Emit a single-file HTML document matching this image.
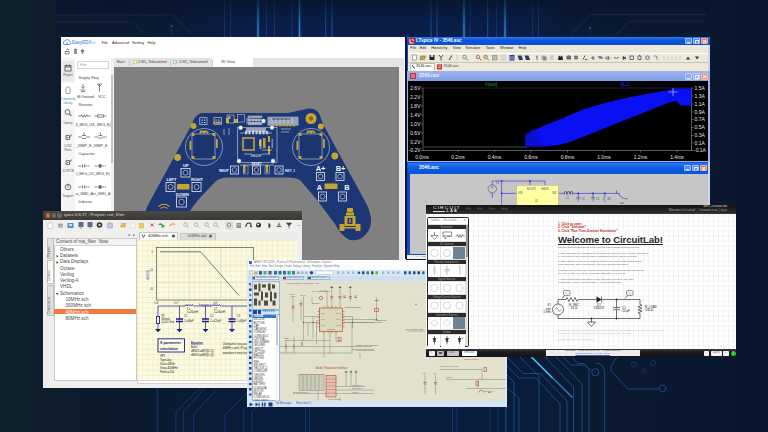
<!DOCTYPE html>
<html lang="en">
<head>
<meta charset="utf-8">
<title>Circuit design software</title>
<style>
*{box-sizing:border-box;margin:0;padding:0}
html,body{width:768px;height:432px;overflow:hidden;background:#0a1a38}
body{position:relative;font-family:"Liberation Sans",sans-serif;color:#222}
.abs{position:absolute}
#bg{position:absolute;left:0;top:0;width:768px;height:432px;
 background:linear-gradient(90deg,#10212e 0,#0f202d 24px,#0e1e2c 30px,#0e1d2c 54px,#0c1b2e 62px,#0b1b32 130px,#0a1c3e 200px,#0a1f4c 245px,#0a1f4e 500px,#0a1c3c 560px,#0a1a32 620px,#0a192f 708px,#0a1831 733px,#08162e 737px,#08162e 768px)}
#bg2{position:absolute;left:0;top:300px;width:768px;height:132px;
 background:linear-gradient(90deg,#10212e 0,#0f202d 24px,#0e1e2c 30px,#0e1d2c 54px,#0c1b2c 100px,#0b1b32 180px,#0a1c3b 260px,#0a1c3e 400px,#0a1c3b 520px,#0b1a30 600px,#0a1830 708px,#0a1830 733px,#08162e 737px,#08162e 768px)}
#bgsvg{position:absolute;left:0;top:0}
.win{position:absolute;overflow:hidden}
.t{position:absolute;white-space:nowrap;line-height:1}
/* ---------- EasyEDA ---------- */
#easy{left:61px;top:37px;width:345px;height:223px;background:#fff}
/* ---------- LTspice ---------- */
#lts{left:405px;top:37px;width:305.200px;height:222px;background:#ece9d8}
/* ---------- Qucs ---------- */
#qucs{left:43px;top:211px;width:259px;height:177px;background:#efefee}
/* ---------- Proteus ---------- */
#prot{left:247px;top:259.500px;width:260px;height:147.500px;background:#e6e6d6}
/* ---------- CircuitLab ---------- */
#clab{left:426px;top:205px;width:310px;height:152px;background:#fff}
.ez-m{font-size:4px;color:#333;letter-spacing:-.1px}
.ez-n{font-size:3px;color:#555;text-align:center;line-height:1.200;white-space:normal}
.ez-l{font-size:3.800px;color:#444}
.ez-t{font-size:3.800px;color:#444}
.xpb{width:7.200px;height:6.600px;border-radius:1.200px;border:.4px solid rgba(255,255,255,.45);overflow:hidden}
.xpb i{position:absolute;display:block;background:#fff;opacity:.85}
.lt-m{font-size:3.800px;color:#222;top:10.200px}
.q-i{font-size:4.600px;color:#4a4a4a}
.qv{font-size:3px;color:#555;transform:rotate(-90deg);transform-origin:0 0}
#qgrid{background-image:linear-gradient(90deg,rgba(200,195,140,.2) .5px,transparent .5px),linear-gradient(rgba(200,195,140,.2) .5px,transparent .5px);background-size:5.200px 5.200px}
.pr-t{font-size:2.500px;color:#456;top:17.600px}
.pr-l{font-size:2.700px;line-height:3.250px;color:#333;white-space:nowrap}
#cgrid{background-color:#fff;background-image:linear-gradient(90deg,#f3f3f3 .6px,transparent .6px),linear-gradient(#f3f3f3 .6px,transparent .6px);background-size:5px 5px;background-position:2px 1.500px}
.cb{top:145.500px;height:5px;border-radius:.8px}
.cp{left:132px;font-size:2.400px;line-height:3.300px;color:#606060}
.th{position:absolute;left:1.700px;width:38px;height:4.200px;background:#2b2b2b;color:#a5a5a5;font-size:2.600px;line-height:1;display:flex;align-items:center;justify-content:center;white-space:nowrap;padding-top:2.600px}
.tc{position:absolute;width:12px;height:12.300px;background:#fff}

</style>
</head>
<body>
<div id="bg"></div><div id="bg2"></div>
<svg id="bgsvg" width="768" height="432" viewBox="0 0 768 432">
<defs>
 <linearGradient id="vfade" x1="0" y1="0" x2="0" y2="1"><stop offset="0" stop-color="#08142c" stop-opacity=".8"/><stop offset=".55" stop-color="#08142c" stop-opacity=".25"/><stop offset="1" stop-color="#08142c" stop-opacity="0"/></linearGradient>
</defs>
<!-- top verticals -->
<g fill="none" stroke-linecap="round">
 <g stroke="#163f7c" stroke-width=".9">
  <path d="M224.500,0V37M230.700,0V37M266.500,0V37M274.500,0V37M292,0V37M470,0V37M496.500,0V37M532.700,0V37M538.500,0V37"/>
 </g>
 <g stroke="#1d5aa6" stroke-width="1">
  <path d="M325.700,0V37M332,0V37M431,0V37M437,0V37M487.700,0V37"/>
 </g>
 <g stroke="#2f8fdc" stroke-width="3.500" opacity=".18">
  <path d="M258,0V37M299.500,0V37M464,0V37M505,0V37"/>
 </g>
 <g stroke="#2f95e0" stroke-width="1.300">
  <path d="M258,0V37M299.500,0V37M464,0V37M505,0V37"/>
 </g>
 <rect x="56" y="0" width="655" height="37" fill="url(#vfade)" stroke="none"/>
 <g stroke="#182f56" stroke-width=".8">
  <path d="M57,15H173L192,34M57,22H132.500L145.500,35M171.500,25V37"/>
  <path d="M706,14.500H591L571,34M706,21H630L615,36M590,27V37"/>
  
 </g>
 <circle cx="171.500" cy="26" r="1.200" fill="#1f4a86"/><circle cx="590" cy="28" r="1.200" fill="#1f4a86"/>
 <!-- bottom traces -->
 <g stroke="#173a78" stroke-width=".9">
  <path d="M157.300,388V432"/>
  <path d="M199,389L176,412V432M204,389L183.300,412V432M216.700,390L193.700,414V432M247,393L225,415V432M243.700,409V432M262,400L252,411V432"/>
  <path d="M305.600,406V432M309.400,406V432M452.500,406V432M457,406V432M490,406V432M498,406V432M505.600,406V432"/>
 </g>
 <g stroke="#194a84" stroke-width="1">
  <path d="M507,357L523,373.500H541L567,401V432"/>
  <path d="M507,366L519,378H536L560,404V432"/>
  <path d="M507,375L514,382V432M507,388L519,398V432M507,397L506,398V432"/>
  <path d="M520,357L539,376V432"/>
  <path d="M545,357L573.500,387V432"/>
  <path d="M556,357L566,367L582,384V432"/>
  <path d="M563,357L571,365H585L589,369V432" stroke="#1a4c86"/>
  <path d="M591.500,371L584,363.500H578L572,357"/>
  <path d="M604.700,374V432M604.700,374Q604.700,363 596,363" stroke="#1a4c86"/>
  <path d="M617,357L611,366V371L628,389H659"/>
 </g>
 <g stroke="#153a68" stroke-width=".8"><circle cx="634" cy="364.500" r="2.500"/><circle cx="644" cy="371" r="2"/><circle cx="653" cy="363" r="2.500"/></g>
 <circle cx="595.300" cy="372.300" r="3.600" stroke="#194a84" stroke-width="1"/>
 <circle cx="662.500" cy="388.500" r="3.300" stroke="#194a84" stroke-width="1"/>
 <path d="M531,356.500L572,397" stroke="#2a86c8" stroke-width="1.300"/>
 <path d="M531,356.500L552,377.500" stroke="#46bdf0" stroke-width="1.500"/>
</g>

</svg>

<div class="win" id="easy">
<div class="abs" style="left:0;top:0;width:345px;height:21px;background:#fff"></div>
<!-- logo -->
<svg class="abs" style="left:2px;top:2px" width="8" height="7" viewBox="0 0 16 14"><path d="M4 11a3.5 3.5 0 0 1 0-7 5 5 0 0 1 9.500 1.500A3 3 0 0 1 13 11z" fill="none" stroke="#5b8fd8" stroke-width="2"/><circle cx="8" cy="8" r="1.600" fill="#5b8fd8"/></svg>
<div class="t" style="left:11px;top:2.500px;font-size:5.800px;font-weight:bold;color:#6a9be0;letter-spacing:-.2px;transform:scaleX(.8);transform-origin:0 0">EasyEDA<span style="font-size:3px;color:#9ab;font-weight:normal"> Std</span></div>
<div class="t ez-m" style="left:40.500px;top:3.500px">File</div>
<div class="t ez-m" style="left:51px;top:3.500px">Advanced</div>
<div class="t ez-m" style="left:71px;top:3.500px">Setting</div>
<div class="t ez-m" style="left:86.500px;top:3.500px">Help</div>
<!-- toolbar icons -->
<svg class="abs" style="left:3px;top:11px" width="26" height="7" viewBox="0 0 26 7"><path d="M1 3.500h4v2.500H1.500zM2 2l1.500-1 1.500 1" fill="none" stroke="#555" stroke-width=".7"/><rect x="10" y=".8" width="3" height="5" fill="#777"/><path d="M10 2.500h3M10 4h3" stroke="#ccc" stroke-width=".5"/><circle cx="18.500" cy="3" r="1.700" fill="#777"/><path d="M17.800 5.500h1.400" stroke="#555" stroke-width=".7"/></svg>
<!-- left nav -->
<div class="abs" style="left:0;top:21px;width:14px;height:202px;background:#f4f4f4"></div>
<div class="abs" style="left:0;top:46px;width:14px;height:26px;background:#fff"></div>
<div class="abs" style="left:1px;top:24px;width:12px;height:20px;background:#e9e9e9"></div>
<svg class="abs" style="left:0;top:21px" width="14" height="202" viewBox="0 0 14 202">
 <g fill="none" stroke="#555" stroke-width=".8">
  <rect x="4" y="7.500" width="6" height="5.500"/><path d="M4 9h6M5.500 6.500v2M8.500 6.500v2"/>
  <path d="M5 30.500q0-1.500 1-1.500h2q1 0 1 1.500v5H5z" stroke="#7a8aa0"/>
  <circle cx="6.500" cy="54" r="2.400"/><path d="M8.300 55.800l2 2" stroke-width="1.200"/>
  <path d="M5 77.500h3.500v4H5zM8.500 78.500q2 0 2-2" /><path d="M5.500 79.500h2" />
  <path d="M5 102.500h3.500v4H5zM8.500 103.500q2 0 2-2" /><path d="M5.500 104.500h2" />
  <circle cx="7" cy="129" r="2.800"/><path d="M6.300 128.300q.2-1.200 1.200-.8t-.5 1.700v.6" stroke-width=".6"/>
 </g>
</svg>
<div class="t ez-n" style="left:0;top:37px;width:14px">Project</div>
<div class="t ez-n" style="left:0;top:61px;width:14px;color:#3f7fd0">Commonly<br>Library</div>
<div class="t ez-n" style="left:0;top:85px;width:14px">Library</div>
<div class="t ez-n" style="left:0;top:108px;width:14px">LCSC<br>Parts</div>
<div class="t ez-n" style="left:0;top:133px;width:14px">JLCPCB</div>
<div class="t ez-n" style="left:0;top:158px;width:14px">Support</div>
<!-- library panel -->
<div class="abs" style="left:16px;top:24px;width:32px;height:7.500px;border:.5px solid #d4d4d4;background:#fff"></div>
<div class="t" style="left:19px;top:26.500px;font-size:3px;color:#999">Filter</div>
<div class="t ez-l" style="left:17.500px;top:40px">Supply Flag</div>
<div class="t ez-l" style="left:16px;top:59px;letter-spacing:-.05px">IB Ground&nbsp;&nbsp;&nbsp;&nbsp;VCC</div>
<div class="t ez-l" style="left:17.500px;top:67px">Resistor</div>
<div class="t ez-l" style="left:14.500px;top:86.500px;letter-spacing:-.1px">3_BKG_US._BKG_E(</div>
<div class="t ez-l" style="left:14.500px;top:107.500px;letter-spacing:-.1px">_33MP_E_33MP_E</div>
<div class="t ez-l" style="left:17.500px;top:115.500px">Capacitor</div>
<div class="t ez-l" style="left:14.500px;top:135.500px;letter-spacing:-.1px">J_BKG_UC_BKG_E(</div>
<div class="t ez-l" style="left:14.500px;top:156px;letter-spacing:-.1px">ai_SMD_Asr_SMD_A</div>
<div class="t ez-l" style="left:17.500px;top:164px">Inductor</div>
<svg class="abs" style="left:14px;top:41.500px" width="38" height="130" viewBox="0 0 38 130">
 <g fill="none" stroke="#555" stroke-width=".7">
  <path d="M8 5v4M6 7.500l2 2 2-2M5.500 11h5M6 12.500h4" />
  <path d="M24.500 13V7M22.500 5.500l2 2 2-2M24.500 5.500v2M22 5h5" />
  <path d="M3 37h3l.7-1.300 1.300 2.600 1.300-2.600 1.300 2.600 1.300-2.600.7 1.300h3"/>
  <path d="M19.500 37h3M22.500 35.800h6v2.400h-6zM28.500 37h3"/>
  <path d="M3 58h4M7 56.500h4M7 59.500h4M9 56.500v-3M11 58h4"/>
  <path d="M19.500 58h4M23.500 56.500h4M23.500 59.500q2-1.500 4 0M25.500 56.500v-3M27.500 58h4"/>
  <path d="M3 87h4.500M7.500 85.300v3.400M9.500 85.300v3.400M9.500 87h5" stroke-dasharray="3 .6"/>
  <path d="M19.500 87h4.500M24 85.300v3.400M26 85.300v3.400M26 87h5" stroke-dasharray="3 .6"/>
  <path d="M3 108h4.500M7.500 106.300v3.400M9.500 106.300v3.400M9.500 108h5" stroke-dasharray="3 .6"/>
  <path d="M19.500 108h4.500M24 106.300v3.400M26 106.300v3.400M26 108h5" stroke-dasharray="3 .6"/>
 </g>
 <rect x="24.300" y="85.300" width="1.700" height="3.400" fill="#555"/><rect x="24.300" y="106.300" width="1.700" height="3.400" fill="#555"/>
</svg>
<!-- library scrollbar -->
<div class="abs" style="left:49.500px;top:21px;width:3px;height:202px;background:#f1f1f1"></div>
<div class="abs" style="left:50px;top:38px;width:2px;height:88px;background:#c4c4c4"></div>
<!-- tab bar -->
<div class="abs" style="left:52.500px;top:21px;width:293px;height:8.500px;background:#e3e3e3"></div>
<div class="abs" style="left:151px;top:21px;width:40.500px;height:8.500px;background:#fff"></div>
<div class="t ez-t" style="left:55.500px;top:23.500px">Start</div>
<div class="t ez-t" style="left:77px;top:23.500px">2.H1_Telecontrol</div>
<div class="t ez-t" style="left:118px;top:23.500px">2.H1_Telecontrol</div>
<div class="t ez-t" style="left:160px;top:23.500px">3D View</div>
<div class="abs" style="left:71.500px;top:23.300px;width:4px;height:4px;border:.5px solid #d8cc8a;background:#f8f3cc"></div>
<div class="abs" style="left:112px;top:23.300px;width:4px;height:4px;border:.5px solid #a5d3a5;background:#dcf2dc"></div>
<div class="abs" style="left:67.500px;top:22.500px;width:.5px;height:6px;background:#c8c8c8"></div>
<div class="abs" style="left:108.500px;top:22.500px;width:.5px;height:6px;background:#c8c8c8"></div>
<div class="abs" style="left:150.500px;top:22.500px;width:.5px;height:6px;background:#c8c8c8"></div>
<!-- 3D canvas -->
<div class="abs" style="left:52.500px;top:29.500px;width:285px;height:194px;background:#808080"></div>
<div class="abs" style="left:337.500px;top:29.500px;width:5px;height:194px;background:#e9e9e9"></div>
<div class="abs" style="left:342.500px;top:0;width:3px;height:223px;background:#fff"></div>
<svg class="abs" style="left:0;top:0" width="345" height="223" viewBox="61 37 345 223">
<path d="M201,113 L288,113 L304,109.600 Q313,106.500 319,113 Q321,118 323,124 L367,205 Q374,220 369,230 Q362,242 350,240 Q341,236 335,224 L317,200 L300,180 Q296,177.500 288,177.500 L228,177.500 Q219,177.500 215,182 L198,200 L180,224 Q174,236 165,240 Q153,242 146,230 Q141,220 148,205 L192,124 Q194,116 201,113 Z" fill="#1d3774"/>
<g fill="none" stroke="#c8d2ea" stroke-width=".6">
 <circle cx="204" cy="147" r="18.500"/><circle cx="311" cy="147" r="18.500"/>
 <rect x="237.500" y="127.500" width="39.500" height="35"/>
</g>
<g fill="#1c356f" stroke="#c5cfea" stroke-width=".6">
 <rect x="192" y="134" width="23" height="25" rx="2"/><rect x="299" y="134" width="23" height="25" rx="2"/>
</g>
<g fill="#c6a434">
 <circle cx="311" cy="118.500" r="5.500"/><circle cx="320.800" cy="126.500" r="3"/><circle cx="334.800" cy="156" r="3.400"/>
 <circle cx="193.500" cy="126" r="3"/><circle cx="177.600" cy="157.500" r="3.400"/>
 <rect x="191.500" y="133" width="3" height="3"/><rect x="212.500" y="133" width="3" height="3"/><rect x="191.500" y="156" width="3" height="3"/><rect x="212.500" y="156" width="3" height="3"/>
 <rect x="298.500" y="133" width="3" height="3"/><rect x="319.500" y="133" width="3" height="3"/><rect x="298.500" y="156" width="3" height="3"/><rect x="319.500" y="156" width="3" height="3"/>
 <rect x="200" y="130.500" width="7" height="2"/><rect x="307" y="130.500" width="7" height="2"/>
 <rect x="189.500" y="141" width="1.800" height="9"/><rect x="216" y="139" width="1.800" height="9"/><rect x="296.500" y="141" width="1.800" height="9"/><rect x="323" y="139" width="1.800" height="9"/>
 <rect x="243" y="138" width="11" height="12" fill="none" stroke="#c6a434" stroke-width="1.600"/>
 <rect x="259" y="140" width="2" height="6"/><rect x="263" y="138" width="2.500" height="10"/><rect x="268" y="136" width="2" height="6"/><rect x="268" y="146" width="2" height="8"/>
 <rect x="226" y="118" width="3" height="5"/><rect x="234" y="119" width="4" height="4"/>
 <rect x="177" y="184" width="12.500" height="5.500" rx="1"/><rect x="324.500" y="183.500" width="13" height="5.500" rx="1"/>
 <rect x="243.500" y="165" width="2" height="8"/><rect x="266" y="165" width="2" height="8"/>
</g>
<circle cx="311" cy="118.500" r="2.200" fill="#7a6a2a"/>
<g fill="#9aa3b8">
 <rect x="247.700" y="115.600" width="14.500" height="9.500"/><rect x="267.500" y="116.700" width="31" height="9"/>
 <rect x="246" y="128" width="20" height="4"/>
</g>
<g fill="#22396f"><rect x="249" y="118" width="16" height="1"/><rect x="249" y="121" width="16" height="1"/><rect x="272" y="118.500" width="18" height="1"/></g>
<g fill="none" stroke="#dfe5f5" stroke-width=".6">
 <rect x="199.800" y="117.700" width="7.200" height="7"/><rect x="214" y="117.700" width="7.700" height="6.500"/>
 <path d="M240,133h10M258,133h14M240,165h34M262,150h10M262,154h8M244,154h8M281,129h10M281,132h8M224,129v6M229,128v7"/>
 <path d="M247,118v6M250,118v6M253,118v6M256,118v6M259,118v6M272,118.500v5M276,118.500v5M280,118.500v5M284,118.500v5M288,118.500v5M292,118.500v5"/>
</g>
<g fill="#dfe5f5"><rect x="201.500" y="119.500" width="1.200" height="1.200"/><rect x="204" y="119.500" width="1.200" height="1.200"/><rect x="201.500" y="122" width="1.200" height="1.200"/><rect x="204" y="122" width="1.200" height="1.200"/><rect x="215.500" y="119.500" width="1.200" height="1.200"/><rect x="218" y="119.500" width="1.200" height="1.200"/><rect x="215.500" y="122" width="1.200" height="1.200"/><rect x="218" y="122" width="1.200" height="1.200"/></g>
<g fill="#c6a434">
 <rect x="213.500" y="121.500" width="1.600" height="2.500"/><rect x="216.300" y="121.500" width="1.600" height="2.500"/><rect x="219.100" y="121.500" width="1.600" height="2.500"/>
 <rect x="275.500" y="123.800" width="2" height="2.600"/><rect x="279" y="123.800" width="2" height="2.600"/><rect x="282.500" y="123.800" width="2" height="2.600"/><rect x="286" y="123.800" width="2" height="2.600"/><rect x="289.500" y="123.800" width="2" height="2.600"/><rect x="293" y="123.800" width="2" height="2.600"/>
 <rect x="199.500" y="131.500" width="2" height="2"/><rect x="203" y="131.500" width="2" height="2"/><rect x="206.500" y="131.500" width="2" height="2"/>
 <rect x="306.500" y="131.500" width="2" height="2"/><rect x="310" y="131.500" width="2" height="2"/><rect x="313.500" y="131.500" width="2" height="2"/>
 <rect x="228" y="116" width="2.500" height="3"/>
</g>
<g fill="#dfe5f5" opacity=".85">
 <rect x="245" y="130.800" width="2.200" height="3.500"/><rect x="248.500" y="130.800" width="2.200" height="3.500"/><rect x="252" y="130.800" width="2.200" height="3.500"/><rect x="255.500" y="130.800" width="2.200" height="3.500"/><rect x="259" y="130.800" width="2.200" height="3.500"/><rect x="262.500" y="130.800" width="2.200" height="3.500"/><rect x="266" y="130.800" width="2.200" height="3.500"/>
 <rect x="259.500" y="139" width="2.200" height="10" opacity=".6"/><rect x="271.500" y="139" width="1.500" height="9" opacity=".6"/>
 <rect x="243.500" y="166" width="4.500" height="8" fill="none" stroke="#dfe5f5" stroke-width=".5"/><rect x="265" y="166" width="4.500" height="8" fill="none" stroke="#dfe5f5" stroke-width=".5"/>
</g>
<g fill="none" stroke="#dfe5f5" stroke-width=".5"><rect x="227" y="115" width="7" height="8"/><rect x="237.700" y="114.500" width="7" height="7.500"/></g>
<g fill="#f4f6fb" stroke="#5a6a8a" stroke-width=".5">
 <circle cx="240.600" cy="127.700" r="2.200"/><circle cx="272" cy="127.500" r="2.200"/><circle cx="263.500" cy="121" r="2.200"/><circle cx="239" cy="161" r="2.200"/><circle cx="273" cy="161" r="2.200"/>
</g>
<g fill="#1a3068" stroke="#e6ebf8" stroke-width=".8">
 <rect x="181" y="168.500" width="9" height="8.500"/><rect x="166" y="182.500" width="9" height="9"/><rect x="192" y="182.500" width="9" height="9"/><rect x="176.500" y="197" width="10" height="10"/>
 <rect x="230.500" y="166" width="8" height="8"/><rect x="252.500" y="166" width="8" height="8"/><rect x="275" y="166" width="8" height="8"/>
 <rect x="316.500" y="172.500" width="8" height="8"/><rect x="336" y="172.500" width="8" height="8"/><rect x="318.500" y="192" width="8" height="9"/><rect x="338.500" y="192" width="8" height="9"/>
</g>
<g fill="none" stroke="#e6ebf8" stroke-width=".6">
 <circle cx="185.500" cy="172.700" r="2.500"/><circle cx="170.500" cy="187" r="2.500"/><circle cx="196.500" cy="187" r="2.500"/><circle cx="181.500" cy="202" r="2.800"/>
 <circle cx="234.500" cy="170" r="2.300"/><circle cx="256.500" cy="170" r="2.300"/><circle cx="279" cy="170" r="2.300"/>
 <circle cx="320.500" cy="176.500" r="2.300"/><circle cx="340" cy="176.500" r="2.300"/><circle cx="322.500" cy="196.500" r="2.500"/><circle cx="342.500" cy="196.500" r="2.500"/>
</g>
<g fill="#f2f5fc" font-family="Liberation Sans, sans-serif" font-weight="bold">
 <text x="186" y="167" font-size="4.200" text-anchor="middle">UP</text>
 <text x="171.500" y="181" font-size="4" text-anchor="middle">LEFT</text>
 <text x="197" y="180.500" font-size="3.800" text-anchor="middle">RIGHT</text>
 <text x="182.400" y="195.500" font-size="4.200" text-anchor="middle">DOWN</text>
 <text x="219" y="171.500" font-size="3.200">WKUP</text>
 <text x="256.500" y="164.800" font-size="3" text-anchor="middle">RESET</text>
 <text x="285" y="171.500" font-size="3.200">KEY_1</text>
 <text x="256" y="157" font-size="2.600" text-anchor="middle" font-weight="normal">JHB103P</text>
 <text x="320.500" y="171" font-size="7.400" text-anchor="middle">A+</text>
 <text x="340.500" y="171" font-size="7.400" text-anchor="middle">B+</text>
 <text x="319.500" y="190" font-size="7.400" text-anchor="middle">A</text>
 <text x="347" y="190" font-size="7.400" text-anchor="middle">B</text>
</g>
<g fill="#c6a434">
 <rect x="347" y="208" width="6" height="4" rx="1"/><rect x="346" y="212.500" width="8" height="3"/><rect x="344.500" y="216" width="11" height="10"/><rect x="339.500" y="224" width="5" height="7"/><rect x="355.500" y="224" width="5" height="7"/><rect x="344" y="227" width="12" height="1.500"/>
</g>
<rect x="347.500" y="218" width="5" height="6" fill="#1d3774"/><rect x="349.300" y="219" width="1.400" height="4" fill="#c6a434"/>
<g fill="none" stroke="#c6a434" stroke-width="1.100"><path d="M160.500,208.500 q3.500,-3 7,0"/><path d="M158.500,206.500 q5.500,-4.600 11,0"/></g>

</svg>

</div>

<div class="win" id="lts">
<div class="abs" style="left:0;top:0;width:306px;height:222px;background:#0b4fd0"></div>
<div class="abs" style="left:0;top:0;width:2.300px;height:222px;background:#0c1230"></div>
<!-- title -->
<div class="abs" style="left:2px;top:0;width:304px;height:8px;background:linear-gradient(#2d7af0,#0a56dc 40%,#0a50d0)"></div>
<svg class="abs" style="left:3.500px;top:1px" width="6" height="6" viewBox="0 0 6 6"><rect width="6" height="6" fill="#c22"/><path d="M1 1v4h3.500M3 1.500l2 1" stroke="#fff" stroke-width=".9" fill="none"/></svg>
<div class="t" style="left:11px;top:1.500px;font-size:4.600px;font-weight:bold;color:#fff">LTspice IV - 3546.asc</div>
<div class="abs xpb" style="left:279.5px;top:0.7px;background:#4f8cf0"><i style="left:1.300px;top:3.600px;width:3px;height:1.300px"></i></div>
<div class="abs xpb" style="left:287.5px;top:0.7px;background:#4f8cf0"><i style="left:1.300px;top:1.300px;width:4px;height:4px;background:none;border:.7px solid #fff;border-top-width:1.200px"></i></div>
<div class="abs xpb" style="left:295.5px;top:0.7px;background:#e4744f"><span class="t" style="left:.9px;top:-.7px;font-size:7.500px;color:#fff;font-weight:bold">×</span></div>
<div class="abs" style="left:303px;top:8px;width:3px;height:214px;background:#cdd6f0"></div>
<!-- menubar -->
<div class="abs" style="left:3px;top:8px;width:300px;height:7.500px;background:#ece9d8"></div>
<div class="t lt-m" style="left:5.300px">File</div><div class="t lt-m" style="left:14.800px">Edit</div><div class="t lt-m" style="left:26.200px">Hierarchy</div><div class="t lt-m" style="left:47.700px">View</div><div class="t lt-m" style="left:60.600px">Simulate</div><div class="t lt-m" style="left:80.700px">Tools</div><div class="t lt-m" style="left:95px">Window</div><div class="t lt-m" style="left:113.600px">Help</div>
<!-- toolbar -->
<div class="abs" style="left:3px;top:15.500px;width:300px;height:10px;background:#ece9d8;border-top:.5px solid #fff;border-bottom:.5px solid #c9c5b2"></div>
<svg class="abs" style="left:3px;top:16px" width="300" height="9" viewBox="0 0 300 9">
 <g>
  <rect x="4.500" y="2" width="4" height="5" fill="#fff" stroke="#777" stroke-width=".6"/>
  <path d="M12 6.500l1-3.500h4.500l-1 3.500z" fill="#c9a94a" stroke="#65561c" stroke-width=".5"/>
  <rect x="21.500" y="2" width="5" height="5" fill="#223"/><rect x="22.800" y="2" width="2.400" height="2" fill="#ddd"/>
  <path d="M31 2l2 2.500 2-2.500M33 4.500v3" stroke="#444" stroke-width=".9" fill="none"/>
  <path d="M41 7l3-4.500" stroke="#556" stroke-width="1.100"/>
  <path d="M49 2v5" stroke="#bbb" stroke-width=".6"/>
  <circle cx="56.500" cy="4" r="1.800" fill="#f5e9a0" stroke="#555" stroke-width=".6"/><path d="M58 5.500l1.800 1.800" stroke="#555" stroke-width=".9"/>
  <circle cx="70" cy="4" r="1.800" fill="#f2c8b0" stroke="#744" stroke-width=".6"/><path d="M71.500 5.500l1.800 1.800" stroke="#744" stroke-width=".9"/>
  <circle cx="77.500" cy="4" r="1.800" fill="#f2c8b0" stroke="#744" stroke-width=".6"/><path d="M79 5.500l1.800 1.800" stroke="#744" stroke-width=".9"/>
  <rect x="84.500" y="2.500" width="4.500" height="4.500" fill="#bbb" stroke="#777" stroke-width=".5"/>
  <rect x="93" y="2.500" width="4.500" height="4.500" fill="#ddd" stroke="#bbb" stroke-width=".5"/>
  <rect x="101.500" y="2" width="5" height="5.500" fill="#2a3fa8"/><path d="M101.500 4h5M101.500 5.800h5" stroke="#dfe6ff" stroke-width=".6"/>
  <path d="M109.500 2.500h4l1.500 4.500h-4z" fill="#30386a"/><path d="M116.500 2.500h4l1.500 4.500h-4z" fill="#30386a"/>
  <path d="M129 2.500v4.500M128 4h2" stroke="#667" stroke-width=".8"/>
  <rect x="133.500" y="2.500" width="3.500" height="4" fill="#aab"/><rect x="135" y="3.500" width="3.500" height="4" fill="#889"/>
  <rect x="142" y="2.500" width="3.500" height="4.500" fill="#ccc"/>
  <path d="M150 7l.5-3.500 1.200-1 .8 1.500.8-1.500 1.200 1 .5 3.500z" fill="#222"/>
  <rect x="158.500" y="3" width="4.500" height="3.500" fill="#666"/><rect x="159.500" y="2" width="2.500" height="1.300" fill="#999"/>
  <circle cx="168" cy="4.500" r="2" fill="#555"/><circle cx="168" cy="4.500" r=".8" fill="#ddd"/>
  <path d="M175 6.500l2-4M177 6.500h2.500" stroke="#335" stroke-width=".8" fill="none"/>
  <path d="M183 5h4M185 3v4" stroke="#335" stroke-width=".7"/>
  <path d="M190 4.500l1-1.500 1 3 1-3 1 3 1-1.500" stroke="#335" stroke-width=".6" fill="none"/>
  <path d="M199 3v4M200.500 3v4M197 5h2M200.500 5h2" stroke="#335" stroke-width=".6"/>
  <path d="M206 5q.8-2 1.600 0t1.600 0 1.600 0" stroke="#335" stroke-width=".6" fill="none"/>
  <path d="M215 3.500v3l2.500-1.500zM217.500 3.500v3" stroke="#335" stroke-width=".6" fill="#335"/>
  <rect x="222" y="3" width="3.500" height="3.500" fill="none" stroke="#335" stroke-width=".7"/>
  <path d="M230 3h3v3.500h-3zM231.500 1.800v1.200" fill="none" stroke="#335" stroke-width=".7"/>
  <circle cx="239.500" cy="4.700" r="1.800" fill="none" stroke="#335" stroke-width=".7"/>
  <path d="M246 3.500q1.500-1.500 3 0v3" fill="none" stroke="#556" stroke-width=".7"/>
  <path d="M256 3v4M260 3v4M264 3v4M268 3v4M272 3v4" stroke="#c5c1b0" stroke-width=".6"/>
  <path d="M278 6.500h4l-2-3z" fill="#333"/><path d="M287 3.500h4l-2 3z" fill="#333"/>
 </g>
</svg>
<!-- doc tabs -->
<div class="abs" style="left:3px;top:25.500px;width:300px;height:8px;background:#ece9d8"></div>
<div class="abs" style="left:4.500px;top:26px;width:25px;height:7.500px;background:#fdfdf8;border:.5px solid #c5c1ac;border-bottom:none"></div>
<div class="t" style="left:11px;top:27.800px;font-size:3.800px;color:#222">3546.asc</div>
<div class="t" style="left:38.500px;top:27.800px;font-size:3.800px;color:#444">3546.asc</div>
<svg class="abs" style="left:6px;top:26.600px" width="40" height="6" viewBox="0 0 40 6"><path d="M1 1l2.500 3.500" stroke="#335" stroke-width="1"/><rect x="26" y=".3" width="5" height="5.200" fill="#c8332b"/><path d="M27 1.800h3M27 3.500h3" stroke="#fff" stroke-width=".6"/></svg>
<!-- MDI child 1 : raw plot -->
<div class="abs" style="left:2.300px;top:34px;width:304px;height:91px;background:#9db1ea"></div>
<div class="abs" style="left:3px;top:34px;width:300px;height:10px;background:linear-gradient(#9db4ee,#7f9de6)"></div>
<svg class="abs" style="left:5px;top:36px" width="6" height="6" viewBox="0 0 6 6"><rect width="6" height="6" fill="#c8332b"/><path d="M1 2h4M1 4h4" stroke="#fff" stroke-width=".7"/></svg>
<div class="t" style="left:14px;top:36.500px;font-size:4.800px;font-weight:bold;color:#e7eefc">3546.raw</div>
<div class="abs xpb" style="left:279.5px;top:36px;background:#8ea9ec"><i style="left:1.300px;top:3.600px;width:3px;height:1.300px"></i></div>
<div class="abs xpb" style="left:287.5px;top:36px;background:#8ea9ec"><i style="left:1.300px;top:1.300px;width:4px;height:4px;background:none;border:.7px solid #fff;border-top-width:1.200px"></i></div>
<div class="abs xpb" style="left:295.5px;top:36px;background:#ea8a70"><span class="t" style="left:.9px;top:-.7px;font-size:7.500px;color:#fff;font-weight:bold">×</span></div>
<div class="abs" style="left:3px;top:44px;width:300px;height:80px;background:#000"></div>
<!-- MDI child 2 : schematic -->
<div class="abs" style="left:3px;top:125.500px;width:300px;height:11.500px;background:linear-gradient(#2a78f2,#0b5be0 45%,#0a55d8)"></div>
<div class="abs xpb" style="left:278.5px;top:127.5px;background:#4f8cf0"><i style="left:1.300px;top:3.600px;width:3px;height:1.300px"></i></div>
<div class="abs xpb" style="left:286.5px;top:127.5px;background:#4f8cf0"><i style="left:1.300px;top:1.300px;width:4px;height:4px;background:none;border:.7px solid #fff;border-top-width:1.200px"></i></div>
<div class="abs xpb" style="left:294.5px;top:127.5px;background:#e4744f"><span class="t" style="left:.9px;top:-.7px;font-size:7.500px;color:#fff;font-weight:bold">×</span></div>
<div class="t" style="left:14px;top:129px;font-size:4.800px;font-weight:bold;color:#fff">3546.asc</div>
<div class="abs" style="left:4.500px;top:137px;width:298px;height:79.700px;background:#c6c6c6"></div>
<div class="abs" style="left:2.300px;top:218.200px;width:303.700px;height:4px;background:#f1efe6"></div><div class="t" style="left:12px;top:218.800px;font-size:2.400px;color:#666">x = 1.384ms</div>
<svg class="abs" style="left:0;top:0" width="306" height="222" viewBox="405 37 306 222">
<g font-family="Liberation Sans, sans-serif" font-size="5" fill="#e2e2e2">
 <path d="M423,88 V150.500 H691.500 V88" fill="none" stroke="#9a9a9a" stroke-width=".6"/>
 <path d="M423,88 H691.500" stroke="#555" stroke-width=".4"/>
 <g stroke="#9a9a9a" stroke-width=".5">
  <path d="M421,88h2M421,97h2M421,106h2M421,115h2M421,124h2M421,133h2M421,142h2M421,150.500h2"/>
  <path d="M691.500,88h2M691.500,96h2M691.500,104h2M691.500,112h2M691.500,119.500h2M691.500,127.500h2M691.500,135.500h2M691.500,143h2M691.500,150.500h2"/>
  <path d="M458,150.500v2M494.500,150.500v2M531,150.500v2M567.500,150.500v2M604,150.500v2M640.500,150.500v2M677,150.500v2"/>
 </g>
 <g text-anchor="end">
  <text x="420.500" y="89.500">2.6V</text><text x="420.500" y="98.500">2.2V</text><text x="420.500" y="107.500">1.8V</text><text x="420.500" y="116.500">1.4V</text><text x="420.500" y="125.500">1.0V</text><text x="420.500" y="134.500">0.6V</text><text x="420.500" y="143.500">0.2V</text><text x="420.500" y="152">-0.2V</text>
 </g>
 <g>
  <text x="694.500" y="89.500">1.5A</text><text x="694.500" y="97.500">1.3A</text><text x="694.500" y="105.500">1.1A</text><text x="694.500" y="113.500">0.9A</text><text x="694.500" y="121">0.7A</text><text x="694.500" y="129">0.5A</text><text x="694.500" y="137">0.3A</text><text x="694.500" y="144.500">0.1A</text><text x="694" y="152">-0.1A</text>
 </g>
 <g text-anchor="middle">
  <text x="422" y="158.500">0.0ms</text><text x="458" y="158.500">0.2ms</text><text x="494.500" y="158.500">0.4ms</text><text x="531" y="158.500">0.6ms</text><text x="567.500" y="158.500">0.8ms</text><text x="604" y="158.500">1.0ms</text><text x="640.500" y="158.500">1.2ms</text><text x="677" y="158.500">1.4ms</text>
 </g>
 <text x="491" y="86" fill="#2fa82f" text-anchor="middle" font-size="4.600">V(out)</text>
 <text x="625" y="86" fill="#3535ff" text-anchor="middle" font-size="4.600">I(L1)</text>
 <path d="M424,147 H527" stroke="#55705a" stroke-width=".7"/>
 <path d="M525.500,136 L533,131 L545,125 L556,121 L584,109 L612.500,101 L640.500,95 L668.500,90 L673,88.600 L691.500,88.600 L691.500,105.500 L681,105.500 L676,100.700 L668.500,102.700 L640.500,114 L612.500,125 L584,136.500 L570,142 L556,145.500 L545,146.500 L525.500,146.500 Z" fill="#0a10f4"/>
 <path d="M525,134 L533,129 L540,131 L536,140 L545,146.500 L525,147 Z" fill="#0a10c0" opacity=".7"/>
 <path d="M673,88 v8 M668.500,92 h9" stroke="#fff" stroke-width=".5"/>
</g>
<!-- schematic -->
<g fill="none" stroke="#2828d8" stroke-width=".6">
 <circle cx="492.300" cy="188.800" r="4.200" stroke="#4a4a9a"/>
 <path d="M492.300,184.600 v-3.600 h9.300 M492.300,193 v5 M501.600,181 h43.400 v4 M501.600,181 v24 M501.600,193.400 h15 M530,181 v4.500"/>
 <path d="M558.500,193.400 h5.500 M573,193.400 h47 M578.300,193.400 v4 M593,193.400 v4 M604.800,193.400 v4 M616.500,193.400 v-3 M618,193.400 q4,6 10,5.500"/>
 <path d="M564,194.500 q1.500,-7 3,0 q1.500,-7 3,0 q1.500,-7 3,0" stroke="#3a3a7a" stroke-width=".8"/>
 <path d="M576.300,197.400 h4 M576.300,198.600 h4 M591,197.400 h4 M591,198.600 h4 M603.300,197.400 l1.500,1 -1.500,1 1.500,1 M578.300,198.600 v3 M593,198.600 v3 M604.800,200.400 v2" stroke="#4a4a9a" stroke-width=".5"/>
 <path d="M490.800,187 h3 M492.300,185.500 v3" stroke="#4a4a9a" stroke-width=".4"/>
</g>
<rect x="516.500" y="185.200" width="42" height="21.500" fill="#ffffa2" stroke="#9a9a60" stroke-width=".4"/>
<g fill="#2828d8"><rect x="500.800" y="180.200" width="1.600" height="1.600"/><rect x="500.800" y="192.600" width="1.600" height="1.600"/><rect x="529.200" y="180.200" width="1.600" height="1.600"/><rect x="577.500" y="192.600" width="1.600" height="1.600"/><rect x="592.200" y="192.600" width="1.600" height="1.600"/><rect x="604" y="192.600" width="1.600" height="1.600"/></g>
<g font-family="Liberation Sans, sans-serif" font-size="2.600" fill="#446">
 <text x="527" y="190">BOOST</text><text x="541" y="190">SHDN</text><text x="518" y="194.300">VIN</text><text x="552" y="194.300">SW</text><text x="535" y="201.500">U1</text>
 <text x="581.500" y="200">C1</text><text x="596" y="200">C2</text><text x="607.500" y="200">R1</text><text x="496" y="184">V1</text><text x="620" y="203.500">out</text><text x="566" y="199">L1</text>
</g>

</svg>

</div>

<div class="win" id="qucs">
<!-- title bar -->
<div class="abs" style="left:0;top:0;width:259px;height:8.500px;background:linear-gradient(#4a4944,#3a3935)"></div>
<div class="abs" style="left:2.800px;top:2px;width:4.600px;height:4.600px;border-radius:50%;background:#e8632a"></div>
<div class="abs" style="left:8.500px;top:2px;width:4.600px;height:4.600px;border-radius:50%;background:#6a6862"></div>
<div class="abs" style="left:14px;top:2px;width:4.600px;height:4.600px;border-radius:50%;background:#6a6862"></div>
<div class="t" style="left:21px;top:2.200px;font-size:4.200px;font-weight:bold;color:#b9b6ae">qucs 0.0.17 - Project: rva_filter</div>
<!-- toolbar -->
<div class="abs" style="left:0;top:8.500px;width:259px;height:12px;background:#f0efed"></div>
<svg class="abs" style="left:0;top:9px" width="259" height="11" viewBox="0 0 259 11">
 <rect x="5" y="3" width="4.500" height="5.500" fill="#fff" stroke="#aaa" stroke-width=".5"/>
 <rect x="15" y="3.500" width="5" height="4.500" fill="#b9b9b9"/><path d="M15 5h5" stroke="#777" stroke-width=".6"/>
 <rect x="24.500" y="3" width="6" height="5" fill="#4e8fd8"/><rect x="26" y="4" width="3" height="2" fill="#bfe0ff"/>
 <rect x="35.500" y="2" width="5" height="5" fill="#5d6d88"/><path d="M36 7.500l2 1.500 2-1.500" fill="#aab"/>
 <rect x="44.500" y="2" width="5" height="5" fill="#5d6d88"/><path d="M45 7.500l2 1.500 2-1.500" fill="#aab"/>
 <circle cx="56.500" cy="5" r="2.800" fill="#333"/><circle cx="56.500" cy="5" r="1.200" fill="#ccc"/>
 <rect x="64.500" y="3" width="5" height="5" rx="1" fill="#c3c9e6" stroke="#88a" stroke-width=".5"/>
 <path d="M77.500 7l1-3.500h4.500l-1 3.500z" fill="#eec24a" stroke="#a88320" stroke-width=".4"/>
 <rect x="88" y="3" width="4" height="5" fill="#fafafa" stroke="#ccc" stroke-width=".5"/>
 <rect x="96.500" y="3.500" width="4" height="4.500" fill="#f0d04a" stroke="#b8a030" stroke-width=".4"/>
 <path d="M107.500 3.500l3 3M110.500 3.500l-3 3" stroke="#e05050" stroke-width="1"/>
 <path d="M115.500 4q3-2 5 1.500l1-1-.3 3-3-.3 1-1q-1.500-2-3.700-1.200z" fill="#2aa13a"/>
 <path d="M126 4q3-2 5 1.500l1-1-.3 3-3-.3 1-1q-1.500-2-3.700-1.200z" fill="#e9a02a" transform="translate(258,0) scale(-1,1) translate(0,0)" opacity="0"/>
 <path d="M127 6q2-3.500 5-1.500" stroke="#e9a02a" stroke-width="1.200" fill="none"/>
 <g fill="none" stroke="#7fae84" stroke-width=".8"><circle cx="142.500" cy="4.500" r="1.800"/><circle cx="153" cy="4.500" r="1.800"/><circle cx="163.500" cy="4.500" r="1.800"/><circle cx="172.500" cy="4.500" r="1.800"/></g>
 <g stroke="#9aa8b6" stroke-width=".8"><path d="M143.800 5.800l2 2.200M154.300 5.800l2 2.200M164.800 5.800l2 2.200M173.800 5.800l2 2.200"/></g>
 <rect x="183" y="2" width="6.500" height="7" fill="#e2e2e2" stroke="#bbb" stroke-width=".4"/><circle cx="186" cy="5" r="1.800" fill="none" stroke="#666" stroke-width=".7"/>
 <rect x="193.500" y="3" width="4.500" height="5" fill="#888"/><path d="M194 4.500h3.500M194 6h3.500" stroke="#ddd" stroke-width=".5"/>
 <path d="M203 7q0-4 3-4t1.500 3l1.500 1" stroke="#333" stroke-width="1.200" fill="none"/>
 <circle cx="215.500" cy="5" r="2.500" fill="#333"/><circle cx="215" cy="4.500" r="1" fill="#eee"/>
 <path d="M225.500 3q2 0 2 2.500t-2 2.500z" fill="#333"/>
 <path d="M233.500 6.500h5M234.500 5h3M236 5v-2.500" stroke="#444" stroke-width=".8"/>
 <path d="M243.500 3h5l-2.500 3zM246 6v2.500" fill="#445" stroke="#445" stroke-width=".7"/>
 <path d="M254.500 5.500h2.500" stroke="#888" stroke-width=".6"/>
</svg>
<!-- left vertical tabs -->
<div class="abs" style="left:0;top:20.500px;width:11px;height:157px;background:#efeeec"></div>
<div class="abs" style="left:4px;top:27px;width:6.500px;height:21px;background:#e2e1df;border:.5px solid #c2c0bb"></div>
<div class="abs" style="left:4px;top:49px;width:6.500px;height:24px;background:#fbfbfa;border:.5px solid #c2c0bb"></div>
<div class="abs" style="left:4px;top:74px;width:6.500px;height:31px;background:#e2e1df;border:.5px solid #c2c0bb"></div>
<div class="t qv" style="left:5px;top:46px">Projects</div>
<div class="t qv" style="left:5px;top:70px">Content</div>
<div class="t qv" style="left:5px;top:103px">Components</div>
<!-- tree panel -->
<div class="abs" style="left:10.500px;top:27px;width:83px;height:143px;background:#fff;border:.5px solid #c9c7c2"></div>
<div class="abs" style="left:11px;top:27.500px;width:82px;height:7px;background:#f4f3f1;border-bottom:.5px solid #d5d3ce"></div>
<div class="t q-i" style="left:13px;top:28.500px">Content of rva_filter&nbsp;&nbsp;Note</div>
<div class="t q-i" style="left:17px;top:36.6px">Others</div>
<div class="t q-i" style="left:17px;top:42.9px">Datasets</div>
<div class="t q-i" style="left:17px;top:49.2px">Data Displays</div>
<div class="t q-i" style="left:17px;top:55.5px">Octave</div>
<div class="t q-i" style="left:17px;top:61.8px">Verilog</div>
<div class="t q-i" style="left:17px;top:68.1px">Verilog-A</div>
<div class="t q-i" style="left:17px;top:74.4px">VHDL</div>
<div class="t q-i" style="left:17px;top:80.7px">Schematics</div>
<div class="t q-i" style="left:22.5px;top:87.0px">10MHz.sch</div>
<div class="t q-i" style="left:22.5px;top:93.3px">300MHz.sch</div>
<div class="abs" style="left:11px;top:97.600px;width:82px;height:5.800px;background:#f07a3c"></div>
<div class="t q-i" style="left:22.5px;top:99.6px;color:#fff">40MHz.sch</div>
<div class="t q-i" style="left:22.5px;top:105.9px">80MHz.sch</div>
<svg class="abs" style="left:12px;top:42.500px" width="5" height="42" viewBox="0 0 5 42"><path d="M1.500 .8l2 1.400-2 1.400zM1.500 7.100l2 1.400-2 1.400zM.8 38.900h2.800l-1.400 2z" fill="#444"/></svg>
<!-- doc tabs -->
<div class="abs" style="left:93.500px;top:20.500px;width:160px;height:8px;background:#eceae7"></div>
<svg class="abs" style="left:84px;top:22px" width="9" height="5" viewBox="0 0 9 5"><path d="M1 1.500h2.500l-1.250 2zM5.500 1.500h2.500l-1.250 2z" fill="#777"/></svg>
<div class="abs" style="left:96px;top:20.500px;width:39px;height:8.500px;background:#fbfaf5;border:.5px solid #c9c7c2;border-bottom:none"></div>
<div class="abs" style="left:137px;top:21.500px;width:36px;height:7px;background:#dddbd6;border:.5px solid #c9c7c2;border-bottom:none"></div>
<div class="t" style="left:105px;top:23px;font-size:4px;color:#333">40MHz.sch</div>
<div class="t" style="left:144.500px;top:23px;font-size:4px;color:#555">40MHz.dpl</div>
<svg class="abs" style="left:97px;top:22px" width="76" height="6" viewBox="0 0 76 6"><path d="M2 1.500l1.500 3 1.500-3" fill="none" stroke="#446" stroke-width=".8"/><circle cx="33.500" cy="3" r="1.600" fill="#555"/><circle cx="70.500" cy="3" r="1.600" fill="#666"/></svg>
<!-- schematic area -->
<div class="abs" id="qgrid" style="left:94px;top:28.500px;width:160px;height:140.500px;background-color:#fcfae0"></div>
<div class="abs" style="left:254px;top:20.500px;width:5px;height:157px;background:#f0efed"></div>
<div class="abs" style="left:94px;top:169px;width:160px;height:3.500px;background:#fff;border:.5px solid #d5d3ce"></div>
<svg class="abs" style="left:0;top:0" width="259" height="177" viewBox="43 211 259 177">
<g font-family="Liberation Sans, sans-serif">
 <rect x="156.500" y="247.500" width="97" height="52.500" fill="none" stroke="#333" stroke-width=".6"/>
 <path d="M156.500,265 h97 M156.500,282.500 h97 M189,247.500 v52.500 M221,247.500 v52.500" stroke="#c9c7a8" stroke-width=".4"/>
 <path d="M160,251.800 H199.500 Q201,251.800 202,253.300 L239,295.500" fill="none" stroke="#3a3f5a" stroke-width=".7"/>
 <g font-size="2.600" fill="#444"><text x="151.500" y="252.800">0</text><text x="149.500" y="271">-20</text><text x="149.500" y="289.500">-40</text><text x="154" y="304">1e6</text><text x="174" y="304">1e7</text><text x="213" y="304">1e8</text><text x="250" y="304">4e8</text></g>
 <text x="149" y="280" font-size="2.800" fill="#33c" transform="rotate(-90 149 280)">dB(S21)</text>
 <text x="205" y="305.500" font-size="2.800" fill="#33c" text-anchor="middle">frequency</text>
 <!-- circuit -->
 <g fill="none" stroke="#1a1a8c" stroke-width=".7">
  <path d="M158,306 H185 M193.500,306 H212 M220.500,306 H247.500"/>
  <path d="M158,306 V316 M158,323 V329 M179.500,306 V319 M179.500,321.500 V329 M205.500,306 V319 M205.500,321.500 V329 M232,306 V319 M232,321.500 V329"/>
  <path d="M185,306 q1.060,-3 2.120,0 q1.060,-3 2.120,0 q1.060,-3 2.120,0 q1.060,-3 2.140,0"/>
  <path d="M212,306 q1.060,-3 2.120,0 q1.060,-3 2.120,0 q1.060,-3 2.120,0 q1.060,-3 2.140,0"/>
  <rect x="156.500" y="316.500" width="3" height="7" stroke-width=".9" fill="#fcfae0"/>
 </g>
 <g stroke="#1a1a8c" stroke-width="1.400"><path d="M176,319 h7 M176,321.500 h7 M202,319 h7 M202,321.500 h7 M228.500,319 h7 M228.500,321.500 h7"/></g>
 <g fill="#1a1a8c"><path d="M155,329 h6 l-3,3.200z M176.500,329 h6 l-3,3.200z M202.500,329 h6 l-3,3.200z M229,329 h6 l-3,3.200z"/></g>
 <g font-size="2.700" fill="#1c1c1c">
  <text x="161.500" y="316.500">P1</text><text x="161.500" y="319.500">Num=1</text><text x="161.500" y="322.500">Z=50 Ohm</text>
  <text x="184" y="316.500">C1</text><text x="184" y="321.500">C=68pF</text>
  <text x="210" y="316.500">C2</text><text x="210" y="321.500">C=120pF</text>
  <text x="236.500" y="316.500">C3</text><text x="236.500" y="321.500">C=68pF</text>
  <text x="187" y="310">L1</text><text x="187" y="313">L=260nH</text><text x="214" y="310">L2</text><text x="214" y="313">L=260nH</text>
 </g>
 <rect x="158" y="338.800" width="26.500" height="13.200" fill="#fcfae0" stroke="#1a1a8c" stroke-width=".9"/>
 <text x="160" y="344" font-size="3.600" font-weight="bold" fill="#1a1a7c">S parameter</text>
 <text x="160" y="349.500" font-size="3.600" font-weight="bold" fill="#1a1a7c">simulation</text>
 <g font-size="2.800" fill="#222">
  <text x="160" y="356.500">SP1</text><text x="160" y="360.500">Type=log</text><text x="160" y="364.500">Start=1MHz</text><text x="160" y="368.500">Stop=400MHz</text><text x="160" y="372.500">Points=200</text>
  <text x="191" y="343.500" font-weight="bold" fill="#1a1a7c" text-decoration="underline">Equation</text>
  <text x="191" y="347.500">Eqn1</text><text x="191" y="351.500">dBS21=dB(S[2,1])</text><text x="191" y="355.500">dBS11=dB(S[1,1])</text>
  <text x="222.500" y="344.500">Chebyshev low-pass filter</text><text x="222.500" y="349">40MHz cutoff, PI-type,</text><text x="222.500" y="353.500">impedance matching 50 Ohm</text>
 </g>
</g>

</svg>

</div>

<div class="win" id="prot">
<div class="abs" style="left:0;top:0;width:260px;height:148px;background:#dfeaf5"></div>
<!-- title -->
<div class="abs" style="left:.5px;top:0;width:259px;height:5.500px;background:#fff"></div>
<div class="abs" style="left:2px;top:1.300px;width:3px;height:3px;background:#3a6fb5"></div>
<div class="t" style="left:7px;top:1.500px;font-size:2.800px;color:#777">ARM7 LPC2138 - Proteus 8 Professional - Schematic Capture</div>
<!-- menu -->
<div class="abs" style="left:.5px;top:5.500px;width:259px;height:5px;background:#fafbfd"></div>
<div class="t" style="left:3px;top:6.500px;font-size:2.700px;color:#777;word-spacing:.5px">File Edit View Tool Design Graph Debug Library Template System Help</div>
<!-- toolbar -->
<div class="abs" style="left:.5px;top:10.500px;width:259px;height:5.500px;background:#d9e7f5"></div>
<svg class="abs" style="left:0;top:10.500px" width="260" height="5.500" viewBox="0 0 260 5.500">
 <g>
  <rect x="3" y="1" width="2.500" height="3.500" fill="#fff" stroke="#678" stroke-width=".4"/><rect x="7" y="1.500" width="3.500" height="3" fill="#e1b64a"/><rect x="12" y="1" width="3" height="3.500" fill="#355e9a"/><rect x="16.500" y="1" width="3" height="3.500" fill="#4b7"/><rect x="21.500" y="1" width="3" height="3.500" fill="#557"/>
  <rect x="27" y="1" width="3" height="3.500" fill="#36a"/><rect x="31.500" y="1" width="3" height="3.500" fill="#285"/><rect x="36" y="1" width="3" height="3.500" fill="#469"/><rect x="40.500" y="1" width="3" height="3.500" fill="#2a6"/><rect x="45" y="1" width="3" height="3.500" fill="#579"/>
  <rect x="50" y="1.500" width="2.500" height="2.500" fill="#8ab"/><rect x="54" y="1.500" width="2.500" height="2.500" fill="#9bc"/><rect x="58" y="1.500" width="2.500" height="2.500" fill="#9bc"/>
  <circle cx="64.500" cy="2.800" r="1.700" fill="#1c4f9c"/>
  <rect x="69" y="1" width="17" height="3.500" fill="#fff" stroke="#9ab" stroke-width=".4"/>
  <rect x="90" y="1.500" width="2.500" height="2.500" fill="#9bc"/><rect x="95" y="1.500" width="2.500" height="2.500" fill="#abd"/><rect x="100" y="1.500" width="2.500" height="2.500" fill="#9bc"/><rect x="105" y="1.500" width="2.500" height="2.500" fill="#abd"/>
  <circle cx="112" cy="2.800" r="1.300" fill="#1c4f9c"/><rect x="115" y="1.300" width="2.500" height="3" fill="#356"/><rect x="119.500" y="1.300" width="2.500" height="3" fill="#27a"/><rect x="124" y="1.300" width="2.500" height="3" fill="#356"/><rect x="128.500" y="1.300" width="2.500" height="3" fill="#6a4"/>
  <rect x="135" y="1.500" width="2.500" height="2.500" fill="#9bc"/><rect x="140" y="1.500" width="2.500" height="2.500" fill="#9bc"/><rect x="145" y="1.500" width="2.500" height="2.500" fill="#abd"/><rect x="150" y="1.500" width="2.500" height="2.500" fill="#9bc"/>
  <rect x="157" y="1.300" width="2.500" height="3" fill="#1c4f9c"/><rect x="161.500" y="1.300" width="2.500" height="3" fill="#2a6a9a"/><rect x="166" y="1.300" width="2.500" height="3" fill="#1c4f9c"/><rect x="170.500" y="1.300" width="2.500" height="3" fill="#345"/><rect x="175" y="1.300" width="2.500" height="3" fill="#27a"/><rect x="179.500" y="1.300" width="2.500" height="3" fill="#1c4f9c"/>
  <rect x="186" y="1.300" width="2.500" height="3" fill="#356"/><rect x="190.500" y="1.300" width="2.500" height="3" fill="#27a"/><rect x="195" y="1.300" width="2.500" height="3" fill="#356"/><rect x="199.500" y="1.300" width="2.500" height="3" fill="#579"/><rect x="204" y="1.300" width="2.500" height="3" fill="#356"/>
  <rect x="211" y="1.300" width="2.500" height="3" fill="#1c4f9c"/><rect x="215.500" y="1.300" width="2.500" height="3" fill="#27a"/><rect x="220" y="1.300" width="2.500" height="3" fill="#356"/><rect x="224.500" y="1.300" width="2.500" height="3" fill="#1c4f9c"/><rect x="229" y="1.300" width="2.500" height="3" fill="#2a6"/><rect x="233.500" y="1.300" width="2.500" height="3" fill="#356"/><rect x="238" y="1.300" width="2.500" height="3" fill="#27a"/><rect x="242.500" y="1.300" width="2.500" height="3" fill="#1c4f9c"/>
 </g>
</svg>
<!-- tabs -->
<div class="abs" style="left:.5px;top:16px;width:259px;height:5px;background:#cddff1"></div>
<div class="abs" style="left:4.700px;top:16.300px;width:27.500px;height:4.700px;background:#e9f1fa;border:.4px solid #9db7d3"></div>
<div class="abs" style="left:35.500px;top:16.300px;width:21.500px;height:4.700px;background:#dbe8f6;border:.4px solid #9db7d3"></div>
<div class="abs" style="left:60.400px;top:16.300px;width:23px;height:4.700px;background:#dbe8f6;border:.4px solid #9db7d3"></div>
<div class="abs" style="left:5.500px;top:17.300px;width:2.500px;height:2.500px;background:#2a5faa"></div>
<div class="abs" style="left:36.300px;top:17.300px;width:2.500px;height:2.500px;background:#b03535"></div>
<div class="abs" style="left:61.200px;top:17.300px;width:2.500px;height:2.500px;background:#2a7a55"></div>
<div class="t pr-t" style="left:9px">Schematic Capture&nbsp;×</div>
<div class="t pr-t" style="left:39.800px">PCB Layout&nbsp;×</div>
<div class="t pr-t" style="left:64.700px">Source Code&nbsp;×</div>
<!-- left icon column -->
<div class="abs" style="left:.5px;top:21px;width:4.500px;height:120px;background:#d6e5f5"></div>
<svg class="abs" style="left:.5px;top:21px" width="4.500" height="120" viewBox="0 0 4.500 120">
 <g fill="#1d4c96">
  <path d="M1 1.500l2.500 1.500-1 .3.700 1.500-.6.300-.7-1.500-.9.700z"/>
  <rect x="1" y="7.500" width="2.500" height="2.500"/><path d="M1 14h2.500M2.250 12.800v2.400" stroke="#1d4c96" stroke-width=".6"/>
  <rect x="1" y="18" width="2.500" height="2"/><rect x="1" y="23" width="2.500" height="2.500" fill="#2a7a9a"/><rect x="1" y="28.500" width="2.500" height="2"/>
  <rect x="1" y="33.500" width="2.500" height="2.500" fill="#2a7a9a"/><rect x="1" y="39" width="2.500" height="2"/><rect x="1" y="44" width="2.500" height="2.500"/><rect x="1" y="49.500" width="2.500" height="2" fill="#2a9a7a"/>
  <rect x="1" y="54.500" width="2.500" height="2.500"/><rect x="1" y="60" width="2.500" height="2"/><rect x="1" y="65" width="2.500" height="2.500" fill="#2a9a7a"/><rect x="1" y="70.500" width="2.500" height="2"/>
  <rect x="1" y="75.500" width="2.500" height="2.500" fill="#233"/><rect x="1" y="81" width="2.500" height="2"/><rect x="1" y="86" width="2.500" height="2.500"/><rect x="1" y="91.500" width="2.500" height="2" fill="#233"/>
  <rect x="1" y="96.500" width="2.500" height="2.500"/><rect x="1" y="102" width="2.500" height="2"/><rect x="1" y="107" width="2.500" height="2.500"/><rect x="1" y="112.500" width="2.500" height="2"/>
 </g>
</svg>
<!-- overview pane -->
<div class="abs" style="left:5px;top:21px;width:27.500px;height:29px;background:#e7e6d4;border:.4px solid #9db7d3"></div>
<!-- device selector -->
<div class="abs" style="left:5px;top:50px;width:27.500px;height:5px;background:#d6e5f5;border:.4px solid #9db7d3"></div>
<div class="abs" style="left:6px;top:50.800px;width:3.500px;height:3.500px;background:#1d4c96"></div><div class="abs" style="left:10.500px;top:50.800px;width:3.500px;height:3.500px;background:#1d4c96"></div>
<div class="t" style="left:16px;top:51.300px;font-size:2.600px;color:#2a5faa">DEVICES</div>
<div class="abs" style="left:5px;top:55px;width:27.500px;height:86.500px;background:#fff;border:.4px solid #9db7d3"></div>
<div class="abs" style="left:5.500px;top:55.300px;width:23px;height:3.300px;background:#2f7bd9"></div>
<div class="abs" style="left:28.500px;top:55.300px;width:2.500px;height:86px;background:#eef1f5"></div><div class="abs" style="left:28.800px;top:56px;width:1.900px;height:29px;background:#c3c9d2"></div>
<div class="abs pr-l" style="left:6.500px;top:55.600px">
<b style="color:#fff">1N4148</b><br>24LC256<br>BUTTON<br>CAP<br>CAP-ELEC<br>CONN-H2<br>CONN-SIL4<br>CRYSTAL<br>LED-GREEN<br>LED-RED<br>LM317T<br>LPC2138<br>MAX232<br>POT-HG<br>RES<br>SW-SPDT<br>TBLOCK-I2<br>CONN-D9F<br>74HC595<br>LM016L<br>DS1307<br>BATTERY<br>ULN2003A<br>MOTOR<br>RELAY<br>CONN-SIL10<br>7SEG-MPX4
</div>
<!-- canvas -->
<div class="abs" style="left:33px;top:21px;width:225px;height:121px;background:#e2e1cd"></div>
<!-- status bar -->
<div class="abs" style="left:.5px;top:141.500px;width:259px;height:6px;background:#d3e4f6"></div>
<svg class="abs" style="left:0;top:142px" width="60" height="5" viewBox="0 0 60 5"><g fill="#16408c"><path d="M2.600 .5l3.600 2-3.600 2z"/><path d="M8.500 .5l2.800 2-2.800 2zM11.600 .5h1v4h-1z"/><path d="M14.800 .5h1.400v4h-1.400zM17.200 .5h1.400v4h-1.400z"/><rect x="21.500" y=".5" width="4" height="4"/></g></svg>
<div class="t" style="left:29px;top:143.300px;font-size:2.600px;color:#557">No Messages&nbsp;&nbsp;&nbsp;&nbsp;&nbsp;&nbsp;Root sheet 1</div>
<svg class="abs" style="left:0;top:0" width="260" height="148" viewBox="247 259.500 260 148">
<g font-family="Liberation Sans, sans-serif">
 <!-- overview thumb -->
 <g fill="#4d4d48">
  <rect x="254" y="284" width="3" height="5"/><rect x="258.500" y="283" width="2" height="8"/><rect x="262" y="284" width="4" height="3"/><rect x="268" y="283" width="2.500" height="7"/><rect x="272" y="284" width="3" height="4"/>
  <rect x="254" y="292" width="5" height="3"/><rect x="261" y="291" width="2" height="9"/><rect x="265" y="292" width="3" height="5"/><rect x="270" y="291" width="2" height="10"/><rect x="274" y="292" width="2.500" height="6"/>
  <rect x="254" y="298" width="3" height="7"/><rect x="258.500" y="300" width="2" height="5"/><rect x="264" y="300" width="4" height="5"/><rect x="272.500" y="300" width="3" height="5"/>
 </g>
 <text x="286.500" y="283.800" font-size="2.500" fill="#c0392b">Microcontroller LPC2138 core</text>
 <g fill="none" stroke="#74796a" stroke-width=".45">
  <!-- left caps / power -->
  <path d="M293,296 v26 M290.500,296 h5 M301,300 v20 M303.500,296 v44"/>
  <path d="M344,322 h30"/>
  <path d="M312,297 v6 h7.500 M320,290.500 h7 v17 M331.700,287.500 v20 M340,287.500 v20 M350.300,287.500 v14"/>
  <path d="M304,316 h15.500 M304,322 h15.500 M308,322 v14 M313,316 v22 M316.500,320 v24"/>
  <path d="M342.500,316 h10 v12 M342.500,322 h40 M342.500,319 h34 v-22"/>
  <path d="M330,331 v22 M336,331 v10 h6 M324,331 v26"/>
  <path d="M285,340 h45 M280,346 h72 M280,352.500 h72 v-30"/>
  <path d="M286,340 v12.500 M294,336 v16.500 M302,340 v6"/>
  <path d="M352,346 h20 M352,349 h22 M360,352 v6"/>
  <!-- right mid -->
  <path d="M407,330.500 h18 M415,304 h2 M416,303 v2"/>
  <!-- bottom section -->
  <path d="M299,374 h25 M299,377.500 h25 M299,381 h25 M299,384.500 h25 M299,388 h25"/>
  <path d="M293,393 h33 M336,393 h38 M336,386 h30 M336,389.500 h38"/>
  <path d="M346,372 v14 M351,372 v14 M356,372 v14 M318,390 v10 M340,396.500 v4"/>
  <!-- lower right block -->
  <path d="M440,369 h42 M446,379 h60 M466,388 h40 M482,369 v10 M478,379 v9 M425,374 v20 M435.500,374 v20"/>
 </g>
 <g fill="#5a5f4e">
  <path d="M330.200,287.500 h3 l-1.500,-2z M338.500,287.500 h3 l-1.500,-2z M348.800,287.500 h3 l-1.500,-2z M344.500,372 h3 l-1.500,-2z M349.500,372 h3 l-1.500,-2z M354.500,372 h3 l-1.500,-2z"/>
  <circle cx="303.500" cy="322" r=".8"/><circle cx="313" cy="322" r=".8"/><circle cx="352.500" cy="322" r=".8"/><circle cx="376.500" cy="319" r=".8"/>
 </g>
 <g fill="none" stroke="#c0392b" stroke-width=".6">
  <circle cx="321" cy="297.500" r="1.700"/>
  <path d="M299.500,303 h3 M299.500,304.500 h3 M330.200,296 h3 M330.200,297.500 h3 M338.500,296 h3 M338.500,297.500 h3 M348.800,296 h3 M348.800,297.500 h3 M343,295.500 h3 M343,297 h3 M354,295.500 h3 M354,297 h3"/>
  <path d="M291.500,306 h3 M291.500,307.500 h3 M374.500,308 h4 v3 h-4z M374.500,300 h4"/>
  <path d="M286,344 v4 M294,344 v4 M302,342 v3 M338,337 h3 v3 h-3z"/>
  <path d="M484,367 h2.500 v4 h-2.500z M476,381 h2.500 v4 h-2.500z M478.500,392 q3,-5 6,0 M488,392 h3"/>
  <path d="M423.500,382 h3 M423.500,383.500 h3 M434,382 h3 M434,383.500 h3"/>
 </g>
 <rect x="319.500" y="307.500" width="23" height="23.500" fill="#dcd8bc" stroke="#b5483a" stroke-width=".7"/>
 <g stroke="#b5483a" stroke-width=".5"><path d="M317.500,311 h2 M317.500,314 h2 M317.500,317 h2 M317.500,320 h2 M317.500,323 h2 M317.500,326 h2 M342.500,311 h2 M342.500,314 h2 M342.500,317 h2 M342.500,320 h2 M342.500,323 h2 M342.500,326 h2 M324,305.500 v2 M328,305.500 v2 M332,305.500 v2 M336,305.500 v2 M324,331 v2 M328,331 v2 M332,331 v2 M336,331 v2"/></g>
 <g font-size="1.800" fill="#6a5a4a"><text x="321" y="313">P0.0</text><text x="321" y="319">P0.1</text><text x="321" y="325">P0.2</text><text x="336" y="313">P1.16</text><text x="336" y="319">P1.17</text><text x="336" y="325">P1.18</text><text x="327" y="329.500">LPC2138</text></g>
 <g font-size="2.200" fill="#555"><text x="344.500" y="307">Crystal/Oscillator</text><text x="375" y="320.500">RESET/ISP</text><text x="356" y="345">CONN-H2 programmer</text><text x="356" y="350">UART0/ISP header</text><text x="405" y="329.500">1 2 3 4 5 SDA SCL</text>
  <text x="311.500" y="291">XTAL 12MHz 22pF</text><text x="289" y="294.500">+3V3</text><text x="300" y="295">VBAT</text><text x="284" y="338.500">GND</text></g>
 <text x="316" y="368" font-size="2.600" fill="#c0392b">Audio / Expansion interface</text>
 <rect x="299" y="374" width="25" height="16" fill="#c9cbb8" stroke="#7a7f6a" stroke-width=".4"/>
 <g stroke="#7a7f6a" stroke-width=".4"><path d="M303,374 v16 M307,374 v16 M311,374 v16 M315,374 v16 M319,374 v16"/></g>
 <rect x="326" y="375" width="10" height="21.500" fill="#e6c1b6" stroke="#b5483a" stroke-width=".6"/>
 <g stroke="#b5483a" stroke-width=".4"><path d="M326,378.500 h10 M326,382 h10 M326,385.500 h10 M326,389 h10 M326,392.500 h10"/></g>
 <g font-size="2" fill="#555"><text x="352" y="385">SPK OUT L</text><text x="352" y="388.500">SPK OUT R</text><text x="352" y="392">MIC IN</text><text x="293" y="392">J2 CONN-SIL10</text><text x="328" y="399.500">U3 74HC595</text></g>
 <g font-size="2" fill="#555"><text x="440" y="366.800">RTXD0 TXD1 RXD1</text><text x="464" y="359.800" fill="#c0392b">RS232 interface</text><text x="446" y="377.500">R5 10k</text><text x="484" y="391.500">Q1 BC547</text><text x="423" y="373">C7</text><text x="433.500" y="373">C8</text></g>
</g>

</svg>

</div>

<div class="win" id="clab">
<!-- canvas grid -->
<div class="abs" id="cgrid" style="left:0;top:8.500px;width:310px;height:136px"></div>
<!-- header -->
<div class="abs" style="left:0;top:0;width:310px;height:8.500px;background:linear-gradient(#141414,#242424 70%,#3a3a3a)"></div>
<div class="t" style="left:7px;top:.6px;font-size:4.400px;color:#f2f2f2;letter-spacing:.9px;transform:scaleX(1.150);transform-origin:0 0">CIRCUIT</div>
<div class="t" style="left:20.500px;top:4.600px;font-size:3.400px;color:#f2f2f2;letter-spacing:1.600px;font-weight:bold">LAB</div>
<div class="abs" style="left:7px;top:6.300px;width:12px;height:.6px;background:#ddd"></div>
<div class="t" style="left:40px;top:2.800px;font-size:3.200px;color:#666;word-spacing:5px">File Edit View Help</div>
<div class="t" style="right:9px;top:1.300px;font-size:2.600px;color:#ddd">docs | circuitlab.com</div>
<div class="t" style="right:9px;top:5px;font-size:2.600px;color:#b5b5b5">"Welcome to CircuitLab" &nbsp;|&nbsp; Unsaved circuit &nbsp;|&nbsp; log in</div>
<!-- toolbox -->
<div class="abs" style="left:1px;top:11.500px;width:42px;height:130.500px;background:#dedede;border:.7px solid #2a2a2a;border-radius:2px"></div>
<div class="abs" style="left:2px;top:12.500px;width:40px;height:6px;background:#fff;border-radius:1px"></div>
<div class="t" style="left:4px;top:14.300px;font-size:2.800px;color:#8a8a8a">Toolbox — Essentials</div>
<div class="t" style="left:37.500px;top:13.500px;font-size:3px;color:#666">▾</div>
<div class="abs" style="left:39.500px;top:19.500px;width:2.500px;height:121px;background:#e4e4e4"></div>
<div class="abs" style="left:39.800px;top:20px;width:1.900px;height:32px;background:#9a9a9a"></div>
<div class="th" style="top:19.5px">Essentials</div>
<div class="tc" style="left:2.0px;top:24.2px;background:#fff"></div>
<div class="tc" style="left:14.6px;top:24.2px;background:#fff"></div>
<div class="tc" style="left:27.2px;top:24.2px;background:#fff"></div>
<div class="th" style="top:37.1px">DC Sources</div>
<div class="tc" style="left:2.0px;top:41.8px;background:#fff"></div>
<div class="tc" style="left:14.6px;top:41.8px;background:#fff"></div>
<div class="tc" style="left:27.2px;top:41.8px;background:#6f8296"></div>
<div class="th" style="top:54.7px">Passive Components</div>
<div class="tc" style="left:2.0px;top:59.4px;background:#fff"></div>
<div class="tc" style="left:14.6px;top:59.4px;background:#fff"></div>
<div class="tc" style="left:27.2px;top:59.4px;background:#fff"></div>
<div class="th" style="top:72.3px">Signal Sources</div>
<div class="tc" style="left:2.0px;top:77.0px;background:#fff"></div>
<div class="tc" style="left:14.6px;top:77.0px;background:#fff"></div>
<div class="tc" style="left:27.2px;top:77.0px;background:#fff"></div>
<div class="th" style="top:89.9px">Voltage/Current Sources</div>
<div class="tc" style="left:2.0px;top:94.6px;background:#fff"></div>
<div class="tc" style="left:14.6px;top:94.6px;background:#fff"></div>
<div class="tc" style="left:27.2px;top:94.6px;background:#fff"></div>
<div class="th" style="top:107.5px">Controlled Sources</div>
<div class="tc" style="left:2.0px;top:112.2px;background:#fff"></div>
<div class="tc" style="left:14.6px;top:112.2px;background:#fff"></div>
<div class="tc" style="left:27.2px;top:112.2px;background:#6f8296"></div>
<div class="th" style="top:125.1px">Diodes</div>
<div class="tc" style="left:2.0px;top:129.8px;background:#fff"></div>
<div class="tc" style="left:14.6px;top:129.8px;background:#fff"></div>
<div class="tc" style="left:27.2px;top:129.8px;background:#fff"></div>
<!-- bottom bar -->
<div class="abs" style="left:0;top:144px;width:310px;height:8px;background:linear-gradient(#3a3a3a,#1c1c1c 40%,#141414)"></div>
<div class="abs cb" style="left:2.500px;width:6px;background:#f4f4f4"></div><div class="t" style="left:4.300px;top:146.200px;font-size:3px;color:#555">&lt;</div>
<div class="abs cb" style="left:11px;width:6.500px;background:#bdbdbd"></div><div class="abs" style="left:12.800px;top:147.300px;width:3px;height:2px;background:#555"></div>
<div class="abs cb" style="left:20.500px;width:12.500px;background:#c4c4c4"></div><div class="t" style="left:22.500px;top:146.700px;font-size:2.600px;color:#777">Build</div>
<div class="abs cb" style="left:35.500px;width:15px;background:#fff"></div><div class="t" style="left:37.800px;top:146.700px;font-size:2.700px;color:#2a6fc9">Simulate</div>
<div class="abs" style="left:119.500px;top:145px;width:94.500px;height:6px;background:#ececec"></div>
<div class="t" style="left:119.500px;width:94.500px;text-align:center;top:145.300px;font-size:2.400px;color:#444">CircuitLab © 2012 CircuitLab, Inc. All rights reserved.</div>
<div class="t" style="left:119.500px;width:94.500px;text-align:center;top:148px;font-size:2.400px;color:#3a66cc;text-decoration:underline">Terms of Service | Privacy Policy</div>
<div class="abs cb" style="left:277.500px;width:5.500px;background:#f4f4f4"></div><div class="t" style="left:279.500px;top:146.200px;font-size:3px;color:#555">-</div>
<div class="abs cb" style="left:284.500px;width:11.500px;background:#f4f4f4"></div><div class="t" style="left:286.800px;top:146.700px;font-size:2.700px;color:#555">100%</div>
<div class="abs cb" style="left:297px;width:5.500px;background:#f4f4f4"></div><div class="t" style="left:298.800px;top:146.200px;font-size:3px;color:#555">+</div>
<div class="abs" style="left:304.500px;top:145.500px;width:5px;height:5px;border-radius:50%;background:radial-gradient(#3be04a,#149a22)"></div>
<!-- text -->
<div class="t" style="left:132px;top:18px;font-size:3.200px;line-height:3.400px;font-weight:bold;color:#c22a22">1. Click to open<br>2. Click "Simulate"<br>3. Click "Run Time-Domain Simulation"</div>
<div class="t" id="cwel" style="left:132px;top:30px;font-size:9.600px;font-weight:bold;color:#262626;text-decoration:underline;letter-spacing:-.1px">Welcome to CircuitLab!</div>
<div class="t cp" style="top:40.500px">This is a quick demo of some of the features of the CircuitLab editor interface.</div>
<div class="t cp" style="top:46.500px">1. Build schematics by dragging elements from the toolbox at left. Rotate components<br>(r), flip (h and v) and connect wires by dragging from the ends of elements.</div>
<div class="t cp" style="top:55px">2. Label nodes (N) and probe voltages. Double-click to set element parameters.<br>Click "Simulate" above and choose "Run Time-Domain Simulation".</div>
<div class="t cp" style="top:64px">3. Double-click a plot to see values along a trace. CircuitLab can plot expressions<br>like V(in)-V(out), I(R_LOAD), and power dissipated, P(R_LOAD).</div>
<div class="t cp" style="top:72.500px">4. Export schematics as images or PDF, and share circuits by URL with<br>collaborators. Happy circuit building! — the CircuitLab team</div>
<div class="t cp" style="top:123.500px;color:#b4b4b4">This circuit: half-wave rectifier with a smoothing capacitor. Try changing C1 to 100 µF, or R_LOAD to</div>
<div class="t cp" style="top:126.800px;color:#b4b4b4">1 kΩ, and re-run the simulation to see how the output ripple changes.</div>
<div class="t cp" style="top:132.500px;color:#b4b4b4">Double-click here to edit this text.</div>
<svg class="abs" style="left:0;top:0" width="310" height="152" viewBox="426 205 310 152">
<g font-family="Liberation Sans, sans-serif">
 <!-- toolbox icons -->
 <g fill="none" stroke="#444" stroke-width=".6">
  <path d="M434.500,232 v3.500 M431,235.500 h7 l-3.500,4z"/>
  <path d="M443,232 h8.500 v4.500 h-4 l-2.500,2.500 v-2.500 h-2z"/>
  <path d="M455.500,236 h1.500 l.7,-1.500 1.200,3 1.200,-3 1.200,3 1.200,-3 .7,1.500 h1.500"/>
  <g stroke="#bbb"><circle cx="434.500" cy="253" r="3.600"/><circle cx="447" cy="253" r="3.600"/></g>
  <g stroke="#999"><path d="M434.500,265.500 v2 l-1.200,.7 2.400,1.200 -2.400,1.200 2.400,1.200 -1.200,.7 v2 M447,265.500 v4 M444.500,269.500 h5 M444.500,271 h5 M447,271 v4 M459.500,265.500 v2.500 q2,1 0,2 q2,1 0,2 q2,1 0,2 v1"/></g>
  <g stroke="#bbb"><circle cx="434.500" cy="288" r="3.600"/><circle cx="447" cy="288" r="3.600"/><circle cx="459.500" cy="288" r="3.600"/>
   <circle cx="434.500" cy="305.500" r="3.600"/><circle cx="447" cy="305.500" r="3.600"/><circle cx="459.500" cy="305.500" r="3.600"/>
   <path d="M431,323 l3.500,-3.500 3.500,3.500 -3.500,3.500z M443.500,323 l3.500,-3.500 3.500,3.500 -3.500,3.500z"/></g>
  <g stroke="#222" fill="#222"><path d="M434.500,336 v2.500 M433,338.500 h3 l-1.500,3z M433,341.500 h3 M434.500,341.500 v3"/><path d="M447,336 v2.500 M445.500,338.500 h3 l-1.500,3z M445.500,341.500 h3 M447,341.500 v3"/><path d="M459.500,336 v2.500 M458,338.500 h3 l-1.500,3z M458,341.500 h3 M459.500,341.500 v3 M461.500,339 l1.500,-1.500"/></g>
 </g>
 <text x="447" y="236" font-size="2.400" text-anchor="middle" fill="#444">NODE</text>
 <!-- circuit -->
 <g fill="none" stroke="#333" stroke-width=".7">
  <path d="M558,304 V299.500 H566 M578,299.500 H596.500 M601.500,299.500 H640 V302"/>
  <path d="M566,299.500 l1,-2 2,4 2,-4 2,4 2,-4 2,4 1,-2"/>
  <path d="M640,302 V304.500 l2,.75 -4,1.500 4,1.500 -4,1.500 4,1.500 -4,1.500 2,.75 V318.500 H558 V315"/>
  <circle cx="558" cy="309.500" r="5.500"/>
  <path d="M555,309.500 q1.500,-3.500 3,0 t3,0" stroke-width=".5"/>
  <path d="M616.500,299.500 V307.500 M613,307.500 h7 M613,310 q3.500,-2 7,0 M616.500,309.200 V318.500"/>
  <path d="M591.500,318.500 V322 M587.500,322 h8 l-4,4.500z"/>
  <path d="M601.500,296.500 v6"/>
  <path d="M562,298.500 l3,-3.500 M625,298.500 l3,-3.500"/>
 </g>
 <path d="M596.500,296.300 v6.400 l5,-3.200z" fill="#222"/>
 <g fill="#333"><circle cx="616.500" cy="299.500" r=".9"/><circle cx="616.500" cy="318.500" r=".9"/><circle cx="591.500" cy="318.500" r=".9"/></g>
 <g fill="#f4f4f4" stroke="#555" stroke-width=".6"><rect x="563.500" y="290.500" width="6.500" height="5" rx="1.200"/><rect x="626.500" y="290.500" width="6.500" height="5" rx="1.200"/></g>
 <g fill="none" stroke="#777" stroke-width=".4"><path d="M564.500,293.500 q1,-2 2,0 t2,0 M627.500,293.500 q1,-2 2,0 t2,0"/></g>
 <g font-size="3" fill="#222">
  <text x="551" y="306" text-anchor="end">V1</text><text x="551" y="309.500" text-anchor="end">sine</text><text x="551" y="313" text-anchor="end">1 kHz</text>
  <text x="574" y="305.500" text-anchor="middle">R_SRC</text><text x="574" y="309" text-anchor="middle">10 Ω</text>
  <text x="599" y="305.500" text-anchor="middle">D1</text><text x="599" y="309" text-anchor="middle">1N4007</text>
  <text x="622" y="308.500">C1</text><text x="622" y="312">10 µF</text>
  <text x="645" y="307.500">R_LOAD</text><text x="645" y="311">100 Ω</text>
 </g>
</g>

</svg>

</div>
</body>
</html>
